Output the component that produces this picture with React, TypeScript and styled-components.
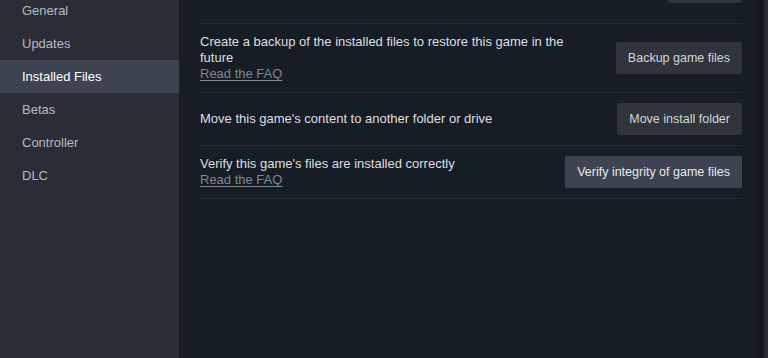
import React from "react";
import styled, { createGlobalStyle } from "styled-components";

const Global = createGlobalStyle`
  html, body { margin: 0; padding: 0; background: #171d25; }
  body { font-family: "Liberation Sans", Arial, sans-serif; }
  * { box-sizing: border-box; }
`;

const Page = styled.div`
  display: flex;
  width: 100%;
  height: 100vh;
  overflow: hidden;
  background: #171d25;
`;

const Sidebar = styled.nav`
  flex: none;
  width: 179px;
  background: #2a2d35;
  display: flex;
  flex-direction: column;
`;

const NavList = styled.ul`
  list-style: none;
  margin: -6px 0 0;
  padding: 0;
`;

const NavItem = styled.li<{ $active?: boolean }>`
  height: 33px;
  line-height: 33px;
  padding-left: 22px;
  font-size: 13px;
  color: ${(p) => (p.$active ? "#ffffff" : "#b7bbc0")};
  background: ${(p) => (p.$active ? "#3d4350" : "transparent")};
`;

const Main = styled.main`
  flex: 1;
  display: flex;
  min-width: 0;
`;

const Panel = styled.section`
  flex: 1;
  padding: 0 14px 0 21px;
  min-width: 0;
`;

const Gutter = styled.div`
  flex: none;
  width: 8px;
  background: #141921;
`;

const Edge = styled.div`
  flex: none;
  width: 4px;
  background: #262c38;
`;

const Rows = styled.div`
  margin-top: -49px;
  display: flex;
  flex-direction: column;
`;

const Row = styled.div<{ $minH?: number }>`
  display: flex;
  align-items: center;
  gap: 24px;
  padding: 10px 0;
  border-bottom: 1px solid #252b35;
  min-height: ${(p) => (p.$minH ? `${p.$minH}px` : "auto")};
`;

const TextBlock = styled.div`
  flex: 1;
  min-width: 0;
  font-size: 13px;
  line-height: 16px;
  color: #dcdfe3;
`;

const FaqLink = styled.a`
  display: block;
  color: #7f8790;
  text-decoration: underline;
  text-underline-offset: 2px;
  cursor: pointer;
`;

const Button = styled.button<{ $lit?: boolean; $w?: number }>`
  flex: none;
  height: 32px;
  width: ${(p) => (p.$w ? `${p.$w}px` : "auto")};
  padding: 0 12px;
  border: none;
  border-radius: 2px;
  font-family: "Liberation Sans", Arial, sans-serif;
  font-size: 12.5px;
  color: ${(p) => (p.$lit ? "#e6e8eb" : "#d3d6da")};
  background: ${(p) => (p.$lit ? "#3d4350" : "#2f343d")};
  cursor: pointer;
`;

export default function App() {
  const nav = ["General", "Updates", "Installed Files", "Betas", "Controller", "DLC"];
  return (
    <>
      <Global />
      <Page>
        <Sidebar>
          <NavList>
            {nav.map((n) => (
              <NavItem key={n} $active={n === "Installed Files"}>
                {n}
              </NavItem>
            ))}
          </NavList>
        </Sidebar>
        <Main>
          <Panel>
            <Rows>
              <Row $minH={73}>
                <TextBlock />
                <Button $w={74} aria-label="Browse" />
              </Row>
              <Row>
                <TextBlock>
                  Create a backup of the installed files to restore this game in the future
                  <FaqLink>Read the FAQ</FaqLink>
                </TextBlock>
                <Button>Backup game files</Button>
              </Row>
              <Row>
                <TextBlock>Move this game's content to another folder or drive</TextBlock>
                <Button>Move install folder</Button>
              </Row>
              <Row>
                <TextBlock>
                  Verify this game's files are installed correctly
                  <FaqLink>Read the FAQ</FaqLink>
                </TextBlock>
                <Button $lit>Verify integrity of game files</Button>
              </Row>
            </Rows>
          </Panel>
          <Gutter />
          <Edge />
        </Main>
      </Page>
    </>
  );
}
